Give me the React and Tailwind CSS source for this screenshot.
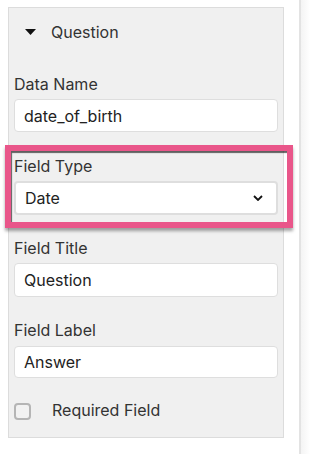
export default function App() {
  const label = "text-[16px] leading-[20px] text-[#333]";
  const input =
    "w-full bg-white border border-[#dedede] rounded-[4px] pl-[9px] flex items-center text-[16px] text-[#222]";
  return (
    <div className="relative w-[310px] h-[454px] bg-white overflow-hidden font-['Inter',sans-serif]">
      <div className="flex h-full">
        <div className="w-[299px] pt-[7px] pl-[8px]">
          <div className="w-[276px] h-[431px] border border-[#dcdcdc] bg-[#f0f0f0] px-[5px] flex flex-col">
            <div className="flex items-center pt-[14px] pl-[11px] h-[34px]">
              <svg width="11" height="6" viewBox="0 0 11 6" className="mr-[15px]">
                <path d="M0 0 L11 0 L5.5 6 Z" fill="#111" />
              </svg>
              <span className="text-[16px] leading-[20px] text-[#333]">Question</span>
            </div>

            <div className={`${label} mt-[32px]`}>Data Name</div>
            <div className={`${input} mt-[5px] h-[33px]`}>date_of_birth</div>

            <div className={`${label} mt-[24px]`}>Field Type</div>
            <div className={`${input} mt-[5px] h-[34px] border-2 border-[#62b5aa] pl-[8px] justify-between pr-[13px]`}>
              <span>Date</span>
              <svg width="10" height="6" viewBox="0 0 10 6">
                <path d="M1 1 L5 5 L9 1" stroke="#111" strokeWidth="1.8" fill="none" />
              </svg>
            </div>

            <div className={`${label} mt-[23px]`}>Field Title</div>
            <div className={`${input} mt-[5px] h-[34px]`}>Question</div>

            <div className={`${label} mt-[23px]`}>Field Label</div>
            <div className={`${input} mt-[6px] h-[32px]`}>Answer</div>

            <div className="flex items-center mt-[22px] h-[20px]">
              <div className="w-[17px] h-[17px] rounded-[4px] border-2 border-[#b5b5b5] bg-[#f2f2f2] mt-[3px]" />
              <span className="ml-[21px] text-[16px] leading-[20px] text-[#333]">Required Field</span>
            </div>
          </div>
        </div>
        <div className="flex-1 border-l-2 border-[#e3e3e3] bg-gradient-to-r from-[#f4f4f4] to-white" />
      </div>

      <div className="absolute left-[5px] top-[145px] w-[288px] h-[83px] border-[6px] border-[#e9568a] shadow-[0_3px_3px_rgba(0,0,0,0.35),inset_1px_2px_1px_rgba(0,0,0,0.6)]" />
    </div>
  );
}
